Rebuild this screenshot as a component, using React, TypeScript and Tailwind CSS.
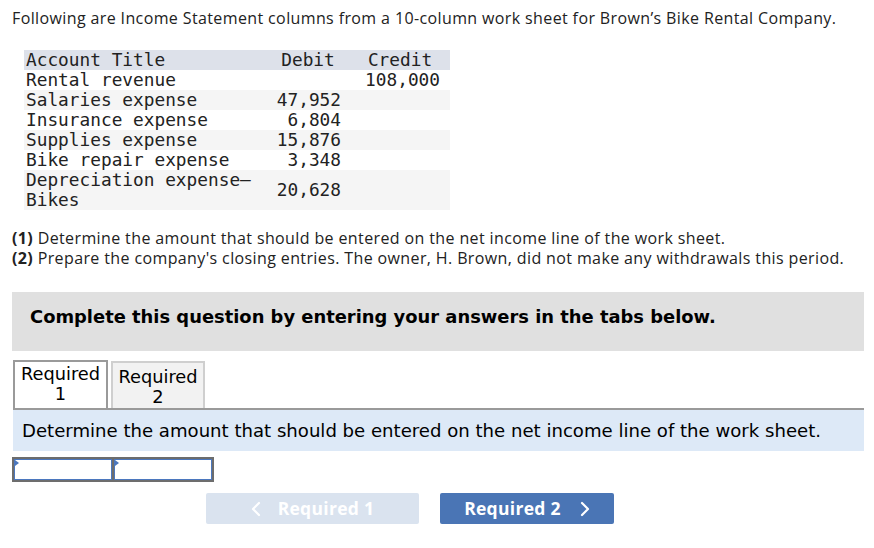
import React from "react";

const rows = [
  { title: "Rental revenue", debit: "", credit: "108,000" },
  { title: "Salaries expense", debit: "47,952", credit: "" },
  { title: "Insurance expense", debit: "6,804", credit: "" },
  { title: "Supplies expense", debit: "15,876", credit: "" },
  { title: "Bike repair expense", debit: "3,348", credit: "" },
  { title: "Depreciation expense—Bikes", debit: "20,628", credit: "" },
];

function Chevron({ dir }: { dir: "left" | "right" }) {
  return (
    <svg width="10" height="16" viewBox="0 0 10 16" fill="none" stroke="currentColor" strokeWidth="2.2" strokeLinecap="round" strokeLinejoin="round">
      {dir === "left" ? <polyline points="8,2 2,8 8,14" /> : <polyline points="2,2 8,8 2,14" />}
    </svg>
  );
}

function AnswerCell() {
  return (
    <div className="relative w-[98px] h-[21px] bg-white border border-[#4b77be]">
      <span className="absolute left-0 top-0 w-0 h-0 border-t-[3px] border-b-[3px] border-l-[4px] border-t-transparent border-b-transparent border-l-[#4b77be]" />
    </div>
  );
}

export default function App() {
  return (
    <div className="w-[874px] h-[548px] bg-white pl-3 pr-[10px] pt-[7px] text-[#222]">
      {/* Intro */}
      <p className="font-['Open_Sans',sans-serif] text-[16px] leading-[22px] tracking-[0.38px]">
        Following are Income Statement columns from a 10-column work sheet for Brown’s Bike Rental Company.
      </p>

      {/* Work sheet table */}
      <table className="ml-3 mt-[21px] border-collapse font-['DejaVu_Sans_Mono',monospace] text-[17.8px] leading-[20px] text-[#222]">
        <thead>
          <tr className="bg-[#dde1ea]">
            <th className="w-[242px] pl-[2px] text-left font-normal align-middle">Account Title</th>
            <th className="w-[84px] font-normal text-center">Debit</th>
            <th className="w-[100px] font-normal text-center">Credit</th>
          </tr>
        </thead>
        <tbody>
          {rows.map((r, i) => (
            <tr key={r.title} className={i % 2 === 1 ? "bg-[#f5f5f5]" : "bg-white"}>
              <td className="pl-[2px] pr-2 align-middle">{r.title}</td>
              <td className="text-right pr-[9px] align-middle">{r.debit}</td>
              <td className="text-right pr-[10px] align-middle">{r.credit}</td>
            </tr>
          ))}
        </tbody>
      </table>

      {/* Instructions */}
      <div className="mt-[18px] font-['Open_Sans',sans-serif] text-[16px] leading-[20px] tracking-[0.38px]">
        <p>
          <span className="font-bold">(1)</span> Determine the amount that should be entered on the net income line of the work sheet.
        </p>
        <p>
          <span className="font-bold">(2)</span> Prepare the company's closing entries. The owner, H. Brown, did not make any withdrawals this period.
        </p>
      </div>

      {/* Banner */}
      <div className="mt-6 h-[59px] bg-[#e0e0e0] flex items-center pl-[18px] pb-[8px] font-['DejaVu_Sans',sans-serif] font-bold text-[17.9px] text-black">
        Complete this question by entering your answers in the tabs below.
      </div>

      {/* Tabs */}
      <div className="mt-[9px] ml-px flex items-end gap-[3px] font-['DejaVu_Sans',sans-serif] text-[17.8px] leading-[20px] text-black">
        <div className="w-[95px] h-[48px] border-2 border-b-0 border-[#9a9a9a] bg-white text-center pt-[2px]">
          Required
          <br />1
        </div>
        <div className="w-[94px] h-[47px] border-2 border-b-0 border-[#cfcfcf] bg-[#f2f2f2] text-center pt-[4px]">
          Required
          <br />2
        </div>
      </div>
      <div className="ml-px h-[2px] bg-[#9a9a9a]" />
      <div className="ml-px h-[41px] bg-[#dde9f7] flex items-center pl-[9px] font-['DejaVu_Sans',sans-serif] text-[18.1px] text-black">
        Determine the amount that should be entered on the net income line of the work sheet.
      </div>

      {/* Answer input */}
      <div className="mt-[6px] inline-flex gap-[2px] p-[2px] bg-[#6d6d6d]">
        <AnswerCell />
        <AnswerCell />
      </div>

      {/* Navigation */}
      <div className="mt-[7px] ml-[194px] flex gap-[21px] font-['Open_Sans',sans-serif] font-bold text-[17.5px] tracking-[0.3px] text-white">
        <div className="w-[213px] h-[31px] rounded-[2px] bg-[#dae3ef] flex items-center justify-center gap-[17px]">
          <Chevron dir="left" />
          <span>Required 1</span>
        </div>
        <div className="w-[174px] h-[31px] rounded-[2px] bg-[#4a75b5] flex items-center justify-center gap-[19px]">
          <span>Required 2</span>
          <Chevron dir="right" />
        </div>
      </div>
    </div>
  );
}
